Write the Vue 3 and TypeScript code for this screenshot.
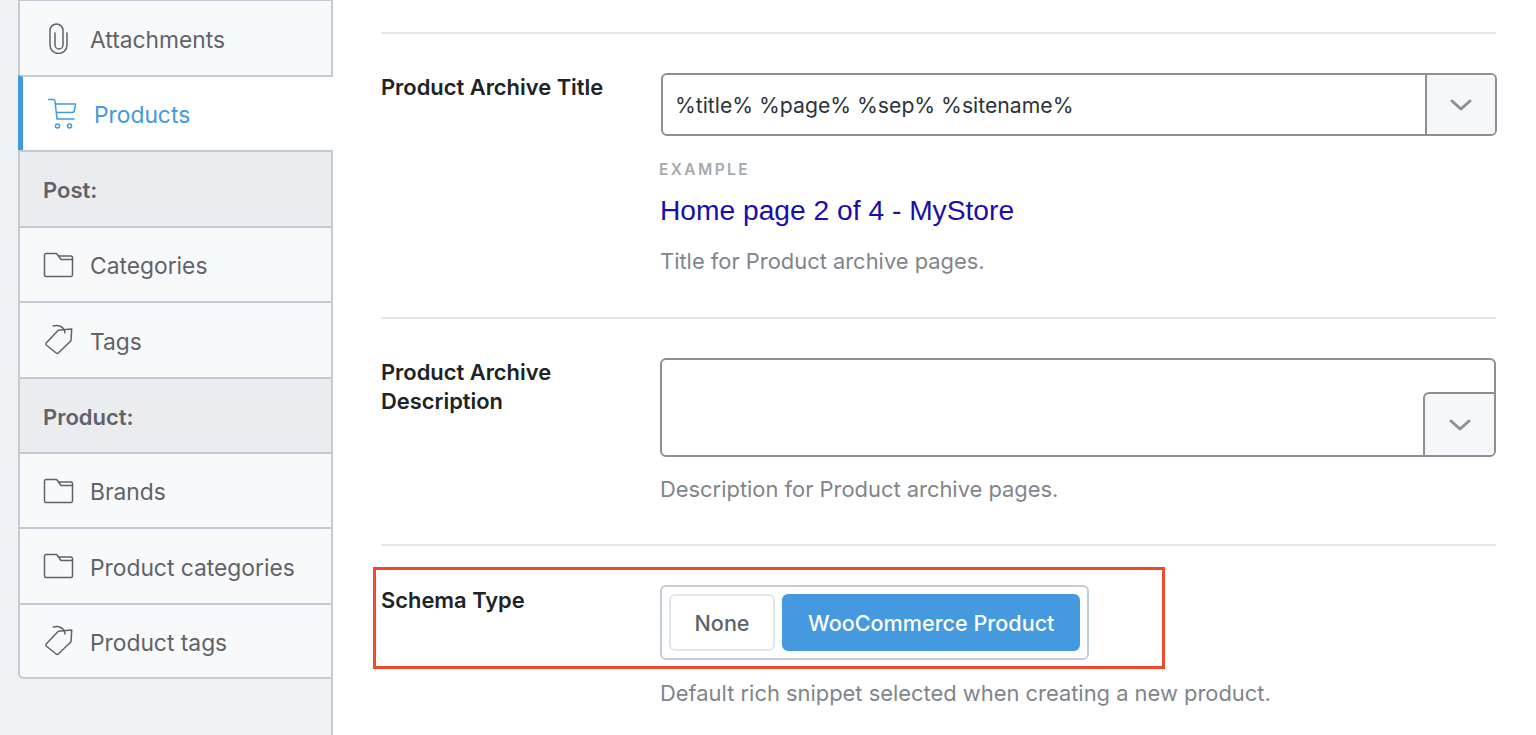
<script setup lang="ts">
type NavRow = { kind: 'item' | 'head' | 'active'; label: string; icon?: 'clip' | 'cart' | 'folder' | 'tag' }
const rows: NavRow[] = [
  { kind: 'item', label: 'Attachments', icon: 'clip' },
  { kind: 'active', label: 'Products', icon: 'cart' },
  { kind: 'head', label: 'Post:' },
  { kind: 'item', label: 'Categories', icon: 'folder' },
  { kind: 'item', label: 'Tags', icon: 'tag' },
  { kind: 'head', label: 'Product:' },
  { kind: 'item', label: 'Brands', icon: 'folder' },
  { kind: 'item', label: 'Product categories', icon: 'folder' },
  { kind: 'item', label: 'Product tags', icon: 'tag' }
]
</script>

<template>
  <div class="page">
    <aside class="side">
      <nav class="nav">
        <div v-for="r in rows" :key="r.label" class="row" :class="r.kind">
          <svg v-if="r.icon" class="ico" width="32" height="32" viewBox="0 0 32 32" fill="none" stroke="currentColor" stroke-width="1.5" stroke-linecap="round" stroke-linejoin="round">
            <path v-if="r.icon === 'clip'" d="M24 11V23a8.500 8.500 0 0 1-17 0V8.500a6.500 6.500 0 0 1 13 0V23a4 4 0 0 1-8 0V11" />
            <template v-else-if="r.icon === 'cart'">
              <path d="M2.500 1.500H7a2 2 0 0 1 2 1.700L11 21H28" />
              <path d="M9.800 6H29.500L28.500 12a2.500 2.500 0 0 1-2.400 2.500H10.800" />
              <circle cx="11.500" cy="28" r="2" />
              <circle cx="23.500" cy="28" r="2" />
            </template>
            <template v-else-if="r.icon === 'folder'">
              <path d="M1.500 6A1.500 1.500 0 0 1 3 4.500H13.500L15.500 7H28A1.500 1.500 0 0 1 29.500 8.500V26A1.500 1.500 0 0 1 28 27.500H3A1.500 1.500 0 0 1 1.500 26Z" />
              <path d="M15.500 7L18 10.500H29.500" />
            </template>
            <template v-else>
              <path d="M15.300 6.200L28.700 5L28 16.700L15.300 29A1.500 1.500 0 0 1 13.200 29L3.200 21A1.500 1.500 0 0 1 3.200 19Z" />
              <path d="M10.300 2C15.300.5 21.300 2.500 22 9" />
            </template>
          </svg>
          <span class="txt">{{ r.label }}</span>
        </div>
      </nav>
    </aside>

    <main class="main">
      <section class="sec s1">
        <div class="label">Product Archive Title</div>
        <div class="field">
          <div class="select">
            <span class="value">%title% %page% %sep% %sitename%</span>
            <span class="btn">
              <svg width="22" height="12" viewBox="0 0 22 12" fill="none" stroke="#8c8f94" stroke-width="3" stroke-linecap="round" stroke-linejoin="round"><path d="M2 2l9 8 9-8" /></svg>
            </span>
          </div>
          <div class="eyebrow">EXAMPLE</div>
          <div class="preview">Home page 2 of 4 - MyStore</div>
          <p class="help h1">Title for Product archive pages.</p>
        </div>
      </section>

      <section class="sec s2">
        <div class="label">Product Archive<br />Description</div>
        <div class="field">
          <div class="area">
            <span class="btn2">
              <svg width="22" height="12" viewBox="0 0 22 12" fill="none" stroke="#8c8f94" stroke-width="3" stroke-linecap="round" stroke-linejoin="round"><path d="M2 2l9 8 9-8" /></svg>
            </span>
          </div>
          <p class="help h2">Description for Product archive pages.</p>
        </div>
      </section>

      <section class="sec s3">
        <div class="label">Schema Type</div>
        <div class="field">
          <div class="toggle">
            <span class="opt none">None</span>
            <span class="opt on">WooCommerce Product</span>
          </div>
          <p class="help h3">Default rich snippet selected when creating a new product.</p>
        </div>
        <div class="mark"></div>
      </section>
    </main>
  </div>
</template>

<style>
html, body { margin: 0; background: #fff; overflow: hidden; }
</style>

<style scoped>
.page {
  display: flex;
  height: 735px;
  overflow: hidden;
  font-family: Inter, "Liberation Sans", sans-serif;
  font-size: 22.8px;
  color: #1d2327;
}
.side {
  width: 333px;
  flex: none;
  box-sizing: border-box;
  background: #f0f1f3;
  border-right: 2px solid #c3cbd6;
  padding-left: 18px;
}
.nav {
  width: 315px;
  margin-top: -1px;
  height: 680px;
  box-sizing: border-box;
  display: grid;
  grid-template-rows: 76px 75px 76px 75px 76px 75px 75px 76px 74px;
  border-left: 2px solid #c3cbd6;
  border-bottom: 2px solid #c3cbd6;
  border-bottom-left-radius: 6px;
  position: relative;
  z-index: 1;
}
.row {
  display: flex;
  align-items: center;
  box-sizing: border-box;
  padding-left: 23px;
  gap: 15px;
  background: #f8f9fb;
  border-top: 2px solid #c3cbd6;
  border-right: 2px solid #c3cbd6;
  color: #5f6369;
}
.row:last-child { border-bottom-left-radius: 5px; }
.txt { margin-top: 2px; }
.head {
  background: #ebecf0;
  font-weight: 600;
  font-size: 22px;
  color: #5f6369;
}
.active {
  background: #fff;
  color: #4299de;
  margin-left: -2px;
  padding-left: 23px;
  border-left: 5px solid #4299de;
  border-right: 0;
  gap: 16px;
}
.ico { flex: none; }
.main {
  flex: 1;
  padding: 32px 40px 0 48px;
  min-width: 0;
}
.sec {
  display: flex;
  border-top: 2px solid #e4e6ea;
  position: relative;
}
.s1 { height: 285px; box-sizing: border-box; padding-top: 39px; }
.s2 { height: 227px; box-sizing: border-box; padding-top: 39px; }
.s3 { padding-top: 39px; }
.label {
  width: 279px;
  flex: none;
  font-weight: 600;
  font-size: 21.9px;
  line-height: 29px;
  color: #1d2327;
}
.s3 .label { padding-top: 1px; }
.field { flex: 1; min-width: 0; }
.select {
  display: flex;
  height: 63px;
  box-sizing: border-box;
  margin-left: 1px;
  border: 2px solid #8c8f94;
  border-radius: 6px;
  align-items: stretch;
  overflow: hidden;
  margin-right: -1px;
}
.value { flex: 1; display: flex; align-items: center; padding-left: 12px; color: #2c3338; font-size: 21.2px; }
.btn {
  width: 68px;
  flex: none;
  background: #f6f7f9;
  border-left: 2px solid #8c8f94;
  display: flex;
  align-items: center;
  justify-content: center;
}
.eyebrow {
  margin-top: 26px;
  margin-left: -1px;
  font-size: 15.5px;
  line-height: 16px;
  font-weight: 600;
  letter-spacing: 2.4px;
  color: #a7aaad;
}
.preview {
  margin-top: 16px;
  font-family: "Liberation Sans", Arial, sans-serif;
  font-size: 28.2px;
  line-height: 32px;
  color: #1a0dab;
}
.help { margin: 0; font-size: 21.9px; line-height: 28px; color: #80858b; }
.h1 { margin-top: 21px; }
.h2 { margin-top: 18px; }
.h3 { margin-top: 19px; }
.area {
  height: 99px;
  box-sizing: border-box;
  border: 2px solid #8c8f94;
  border-radius: 6px;
  display: flex;
  justify-content: flex-end;
  align-items: flex-end;
}
.btn2 {
  width: 71px;
  height: 63px;
  box-sizing: border-box;
  background: #f6f7f9;
  border-left: 2px solid #8c8f94;
  border-top: 2px solid #8c8f94;
  border-radius: 6px 0 4px 0;
  display: flex;
  align-items: center;
  justify-content: center;
}
.toggle {
  display: inline-flex;
  gap: 7px;
  height: 75px;
  box-sizing: border-box;
  padding: 7px;
  border: 2px solid #c3cbd6;
  border-radius: 6px;
}
.opt {
  display: flex;
  align-items: center;
  box-sizing: border-box;
  padding: 0 24px;
  border-radius: 6px;
  border: 2px solid #e2e5ea;
  color: #5f6369;
  font-size: 21.6px;
  font-weight: 500;
  background: #fff;
}
.none { padding: 0 23.5px; }
.on {
  background: #4599de;
  border-color: #4599de;
  color: #fff;
}
.mark {
  position: absolute;
  left: -8px;
  top: 21px;
  width: 792px;
  height: 102px;
  box-sizing: border-box;
  border: 3px solid #ef4a2d;
  pointer-events: none;
}
</style>
